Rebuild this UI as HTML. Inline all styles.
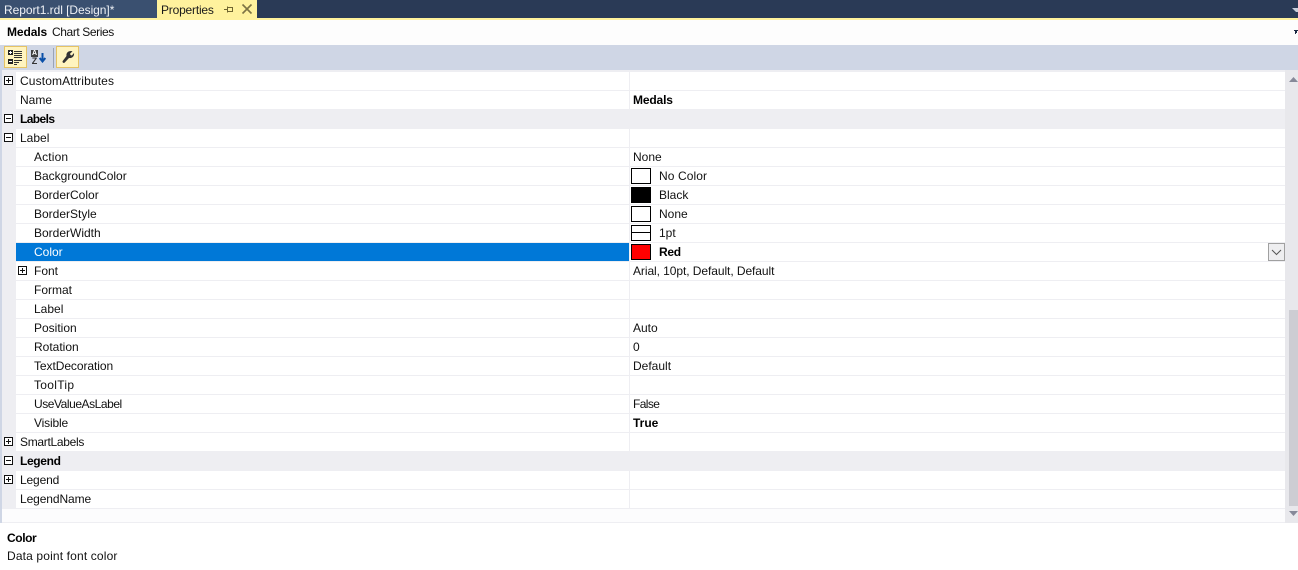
<!DOCTYPE html>
<html><head><meta charset="utf-8"><style>
html,body{margin:0;padding:0}
body{width:1298px;height:570px;overflow:hidden;position:relative;background:#eeeef2;font-family:"Liberation Sans",sans-serif;font-size:12px;color:#111}
div,svg,span{position:absolute;box-sizing:border-box}
.t{white-space:nowrap;line-height:18px;height:18px}
.b{font-weight:bold;color:#000}
.r{left:16px;width:1269px;height:18px;background:#fff}
.s{left:631px;width:20px;height:16px;border:1px solid #000;background:#fff}
.p{left:4px;width:9px;height:9px;border:1px solid #111;background:#fff}
.p:before{content:"";position:absolute;left:1px;top:3px;width:5px;height:1px;background:#111}
.p.x:after{content:"";position:absolute;left:3px;top:1px;width:1px;height:5px;background:#111}
</style></head><body>
<div style="left:0;top:0;width:1298px;height:18px;background:#2a3a56"></div>
<div style="left:0;top:0;width:157px;height:18px;background:#3a5070"></div>
<div class="t" style="left:4px;top:1px;color:#eef1f6;letter-spacing:-.05px">Report1.rdl [Design]*</div>
<div style="left:157px;top:0;width:100px;height:20px;background:#fff29d"></div>
<div style="left:0;top:18px;width:1298px;height:2px;background:#fff29d"></div>
<div class="t" style="left:161px;top:1px;color:#1a1a1a;letter-spacing:-.2px">Properties</div>
<svg style="left:223px;top:4px" width="12" height="12" viewBox="0 0 12 12"><path d="M1 5.500H4M4.500 2.500V8.500M4.500 3.500H9.500V7.500H4.500" fill="none" stroke="#6f6530" stroke-width="1"/></svg>
<svg style="left:241px;top:3px" width="12" height="12" viewBox="0 0 12 12"><path d="M1.500 1.500L10.500 10.500M10.500 1.500L1.500 10.500" fill="none" stroke="#7d7445" stroke-width="1.600"/></svg>
<svg style="left:1292px;top:6px" width="6" height="6" viewBox="0 0 6 6"><path d="M0 2H6V6H4Z" fill="#c8cedb"/></svg>

<div style="left:0;top:20px;width:1298px;height:25px;background:#fdfdfd"></div>
<div class="t b" style="left:7px;top:23px;letter-spacing:-.1px">Medals</div>
<div class="t" style="left:52px;top:23px;letter-spacing:-.4px">Chart Series</div>
<svg style="left:1294px;top:30px" width="4" height="5" viewBox="0 0 4 5"><path d="M0 0H4V1H3V3H2V4H1V1H0Z" fill="#1b2a44"/></svg>

<div style="left:0;top:45px;width:1298px;height:25px;background:#cfd6e5"></div>
<div style="left:4px;top:46px;width:23px;height:22px;background:#fff4bf;border:1px solid #e5c365"></div>
<svg style="left:8px;top:50px" width="15" height="15" viewBox="0 0 15 15"><path d="M6 1.500H14M6 3.500H14M6 5.500H14M6 7.500H14M6 10.500H14M6 12.500H11M6 14.500H9" fill="none" stroke="#333"/><rect x="0" y="0" width="5" height="5" fill="#222"/><rect x="0" y="9" width="5" height="5" fill="#222"/><path d="M1 2.500H4M2.500 1V4M1 11.500H4" stroke="#fff"/></svg>
<div style="left:31px;top:50px;font:bold 7px/7px 'Liberation Sans';width:7px;height:7px;background:#3f3f3f;color:#fff;text-align:center">A</div>
<div style="left:31px;top:57px;font:bold 9px/9px 'Liberation Sans';width:7px;height:8px;color:#333;text-align:center">Z</div>
<svg style="left:39px;top:53px" width="7" height="10" viewBox="0 0 7 10"><path d="M3.500 0V8M.7 5L3.500 8.500L6.300 5" fill="none" stroke="#0b50a8" stroke-width="2"/></svg>
<div style="left:53px;top:48px;width:1px;height:20px;background:#9aa3b6"></div>
<div style="left:56px;top:46px;width:23px;height:22px;background:#fff4bf;border:1px solid #e5c365"></div>
<svg style="left:61px;top:50px" width="14" height="14" viewBox="0 0 14 14"><path d="M5.500 6C5 3 7 1 10 1L11.500 1.200L9 3.700L9.500 5L10.800 5.500L13 3C13.500 6 11.500 8.500 8 8L3.500 12.800C2.500 13.500 1 12 1.700 11Z" fill="#333"/></svg>

<div style="left:0;top:45px;width:2px;height:478px;background:#cfd6e5"></div>

<!-- rows -->
<div class="r" style="top:72px"></div><div class="p x" style="top:76px"></div><div class="t" style="left:20px;top:72px;letter-spacing:.13px">CustomAttributes</div>
<div class="r" style="top:91px"></div><div class="t" style="left:20px;top:91px">Name</div><div class="t b" style="left:633px;top:91px;letter-spacing:-.15px">Medals</div>
<div class="p" style="top:114px"></div><div class="t b" style="left:20px;top:110px;letter-spacing:-.6px">Labels</div>
<div class="r" style="top:129px"></div><div class="p" style="top:133px"></div><div class="t" style="left:20px;top:129px">Label</div>
<div class="r" style="top:148px"></div><div class="t" style="left:34px;top:148px;letter-spacing:.15px">Action</div><div class="t" style="left:633px;top:148px">None</div>
<div class="r" style="top:167px"></div><div class="t" style="left:34px;top:167px">BackgroundColor</div><div class="s" style="top:168px"></div><div class="t" style="left:659px;top:167px;letter-spacing:.1px">No Color</div>
<div class="r" style="top:186px"></div><div class="t" style="left:34px;top:186px">BorderColor</div><div class="s" style="top:187px;background:#000"></div><div class="t" style="left:659px;top:186px">Black</div>
<div class="r" style="top:205px"></div><div class="t" style="left:34px;top:205px">BorderStyle</div><div class="s" style="top:206px"></div><div class="t" style="left:659px;top:205px">None</div>
<div class="r" style="top:224px"></div><div class="t" style="left:34px;top:224px">BorderWidth</div><div class="s" style="top:225px"><div style="left:0;top:6px;width:18px;height:1px;background:#000"></div></div><div class="t" style="left:659px;top:224px">1pt</div>
<div class="r" style="top:243px"></div><div style="left:16px;top:243px;width:613px;height:18px;background:#0078d7"></div><div class="t" style="left:34px;top:243px;color:#fff">Color</div><div class="s" style="top:244px;background:#f00"></div><div class="t b" style="left:659px;top:243px;letter-spacing:-.3px">Red</div>
<div style="left:1268px;top:243px;width:17px;height:18px;background:#eeeef0;border:1px solid #a0a0a0"></div>
<svg style="left:1271px;top:249px" width="11" height="7" viewBox="0 0 11 7"><path d="M1 1L5.500 5.500L10 1" fill="none" stroke="#555" stroke-width="1"/></svg>
<div class="r" style="top:262px"></div><div class="p x" style="left:18px;top:266px"></div><div class="t" style="left:34px;top:262px">Font</div><div class="t" style="left:633px;top:262px;letter-spacing:-.07px">Arial, 10pt, Default, Default</div>
<div class="r" style="top:281px"></div><div class="t" style="left:34px;top:281px">Format</div>
<div class="r" style="top:300px"></div><div class="t" style="left:34px;top:300px">Label</div>
<div class="r" style="top:319px"></div><div class="t" style="left:34px;top:319px">Position</div><div class="t" style="left:633px;top:319px">Auto</div>
<div class="r" style="top:338px"></div><div class="t" style="left:34px;top:338px">Rotation</div><div class="t" style="left:633px;top:338px">0</div>
<div class="r" style="top:357px"></div><div class="t" style="left:34px;top:357px;letter-spacing:-.07px">TextDecoration</div><div class="t" style="left:633px;top:357px">Default</div>
<div class="r" style="top:376px"></div><div class="t" style="left:34px;top:376px;letter-spacing:.3px">ToolTip</div>
<div class="r" style="top:395px"></div><div class="t" style="left:34px;top:395px;letter-spacing:-.45px">UseValueAsLabel</div><div class="t" style="left:633px;top:395px;letter-spacing:-.6px">False</div>
<div class="r" style="top:414px"></div><div class="t" style="left:34px;top:414px;letter-spacing:-.15px">Visible</div><div class="t b" style="left:633px;top:414px">True</div>
<div class="r" style="top:433px"></div><div class="p x" style="top:437px"></div><div class="t" style="left:20px;top:433px;letter-spacing:-.3px">SmartLabels</div>
<div class="p" style="top:456px"></div><div class="t b" style="left:20px;top:452px;letter-spacing:-.35px">Legend</div>
<div class="r" style="top:471px"></div><div class="p x" style="top:475px"></div><div class="t" style="left:20px;top:471px;letter-spacing:-.15px">Legend</div>
<div class="r" style="top:490px"></div><div class="t" style="left:20px;top:490px;letter-spacing:-.1px">LegendName</div>

<!-- column divider -->
<div style="left:629px;top:72px;width:1px;height:38px;background:#eeeef2"></div>
<div style="left:629px;top:129px;width:1px;height:323px;background:#eeeef2"></div>
<div style="left:629px;top:471px;width:1px;height:37px;background:#eeeef2"></div>

<!-- blank -->
<div style="left:2px;top:509px;width:1283px;height:13px;background:#fcfcfd"></div>

<!-- scrollbar -->
<div style="left:1285px;top:70px;width:13px;height:453px;background:#e8e8ec"></div>
<div style="left:1289px;top:310px;width:9px;height:196px;background:#cdcdd3"></div>
<svg style="left:1289px;top:76px" width="9" height="6" viewBox="0 0 9 6"><path d="M0 6L4.500 1L9 6Z" fill="#868999"/></svg>
<svg style="left:1289px;top:511px" width="9" height="6" viewBox="0 0 9 6"><path d="M0 0H9L4.500 5Z" fill="#868999"/></svg>

<!-- description -->
<div style="left:0;top:523px;width:1298px;height:47px;background:#fff"></div>
<div class="t b" style="left:7px;top:529px;letter-spacing:-.4px">Color</div>
<div class="t" style="left:7px;top:547px;letter-spacing:.15px">Data point font color</div>
</body></html>
